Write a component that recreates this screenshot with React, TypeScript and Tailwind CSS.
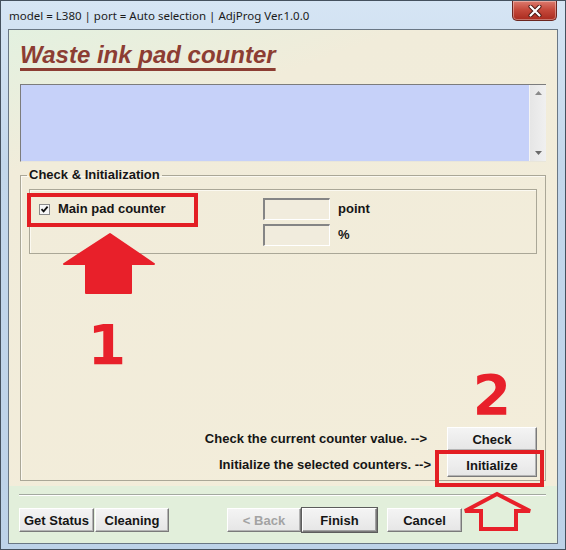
import type { ReactNode } from "react";

const RED = "#e8202a";

function WinButton({
  children,
  width = "w-[75px]",
  isDefault = false,
  disabled = false,
  className = "",
}: {
  children: ReactNode;
  width?: string;
  isDefault?: boolean;
  disabled?: boolean;
  className?: string;
}) {
  return (
    <button
      type="button"
      className={`${width} h-[24px] shrink-0 border border-t-white border-l-white border-b-[#7a7a7a] border-r-[#7a7a7a] bg-[linear-gradient(#f4f4f4,#e6e6e6)] text-[13px] font-bold leading-none ${
        disabled ? "text-[#a3a3a3]" : "text-[#151515]"
      } ${
        isDefault
          ? "shadow-[0_0_0_1px_#5c5c5c,inset_-1px_-1px_0_#a0a0a0]"
          : "shadow-[inset_-1px_-1px_0_#b4b4b4]"
      } ${className}`}
    >
      {children}
    </button>
  );
}

function CheckBox() {
  return (
    <span className="flex h-[11px] w-[11px] items-center justify-center border border-[#8a8a8a] bg-[#f7f7f7]">
      <svg width="9" height="9" viewBox="0 0 9 9">
        <path d="M1.5 4.2 L3.6 6.4 L7.6 1.6" fill="none" stroke="#111" strokeWidth="1.8" />
      </svg>
    </span>
  );
}

function SunkenField() {
  return (
    <div className="h-[22px] w-[67px] border-t-2 border-l-2 border-t-[#858585] border-l-[#858585] border-b border-r border-b-white border-r-white bg-[#f1ecdd]" />
  );
}

function CloseButton() {
  return (
    <div className="flex h-[20px] w-[45px] items-center justify-center rounded-b-[5px] border border-t-0 border-[#6b2620] bg-[linear-gradient(#dc7b6e,#c64a3c_45%,#a92a1e)] shadow-[inset_0_0_0_1px_rgba(255,255,255,0.35)]">
      <svg width="14" height="12" viewBox="0 0 14 12">
        <path d="M2.5 1.5 L11.5 10.5 M11.5 1.5 L2.5 10.5" stroke="#4a1712" strokeWidth="4" strokeLinecap="round" />
        <path d="M2.5 1.5 L11.5 10.5 M11.5 1.5 L2.5 10.5" stroke="#ffffff" strokeWidth="2.2" strokeLinecap="round" />
      </svg>
    </div>
  );
}

// red marks drawn on top of the dialog
function Annotations() {
  return (
    <div className="pointer-events-none absolute inset-0">
      <div className="absolute left-[27px] top-[193px] h-[34px] w-[171px] border-4 border-[#e31e24]" />
      <div className="absolute left-[435px] top-[450px] h-[37px] w-[109px] border-4 border-[#e31e24]" />
      <svg className="absolute left-0 top-0" width="566" height="550" viewBox="0 0 566 550">
        <path
          d="M110 234 L154 264 L131 264 L131 293 L86 293 L86 264 L64 264 Z"
          fill={RED}
          stroke={RED}
          strokeWidth="2"
          strokeLinejoin="round"
        />
        <path
          d="M497 494 L530 511 L516 511 L516 529 L481 529 L481 511 L465 511 Z"
          fill="none"
          stroke={RED}
          strokeWidth="4"
          strokeLinejoin="miter"
        />
      </svg>
      <div className="absolute left-[87px] top-[318px] w-[40px] text-center font-['DejaVu_Sans',sans-serif] text-[55px] font-bold leading-none text-[#e8202a]">
        1
      </div>
      <div className="absolute left-[472px] top-[368px] w-[40px] text-center font-['DejaVu_Sans',sans-serif] text-[55px] font-bold leading-none text-[#e8202a]">
        2
      </div>
    </div>
  );
}

export default function App() {
  return (
    <div className="relative h-[550px] w-[566px] overflow-hidden bg-[linear-gradient(#d6e5f4,#c3d7eb_30%,#bdd2e8)] p-px font-['Liberation_Sans',Arial,sans-serif] text-[#151515] shadow-[inset_0_0_0_1px_#45515e]">
      {/* title bar */}
      <div className="flex h-[28px] items-start justify-between pl-[8px] pr-[8px]">
        <span className="pt-[7px] font-['Noto_Sans',sans-serif] text-[11.5px] leading-[16px] text-[#1b1b1b]">
          model = L380 | port = Auto selection | AdjProg Ver.1.0.0
        </span>
        <CloseButton />
      </div>

      {/* client area */}
      <div className="mx-[7px] flex h-[515px] flex-col border border-[#6a7784] bg-[#e2efdb]">
        <div className="flex h-[456px] flex-col bg-[linear-gradient(160deg,#e3f1e0_0%,#f1ecda_22%,#f3edda_100%)] px-[11px] pt-[11px]">
          <h1 className="h-[28px] text-[24px] font-bold italic leading-[28px] text-[#8c3d33] underline decoration-[3px] underline-offset-[5px]">
            Waste ink pad counter
          </h1>

          {/* log box */}
          <div className="mt-[15px] flex h-[78px] border-t border-l border-t-[#7c7c7c] border-l-[#7c7c7c] border-b border-b-[#e9e6da]">
            <div className="flex-1 bg-[#c6d1f9]" />
            <div className="flex w-[17px] flex-col items-center justify-between border-l border-[#f4f4f4] bg-[linear-gradient(90deg,#e6e6e6,#f0f0f0)] py-[6px]">
              <svg width="7" height="4" viewBox="0 0 7 4">
                <path d="M0 4 L3.5 0 L7 4 Z" fill="#8a8a8a" />
              </svg>
              <svg width="7" height="4" viewBox="0 0 7 4">
                <path d="M0 0 L7 0 L3.5 4 Z" fill="#6a6a6a" />
              </svg>
            </div>
          </div>

          <fieldset className="mt-[5px] border border-[#aaa797] px-[8px] pb-[2px] pt-[6px] shadow-[inset_1px_1px_0_#fbf9f1]">
            <legend className="-ml-[2px] px-[2px] text-[13px] font-bold leading-[16px]">
              Check &amp; Initialization
            </legend>
            <div className="flex h-[289px] flex-col">
              <div className="h-[65px] border border-[#aaa797] pl-[9px] pt-[8px] shadow-[inset_1px_1px_0_#fbf9f1]">
                <div className="grid grid-cols-[224px_67px_auto] gap-y-[4px]">
                  <div className="flex items-center">
                    <CheckBox />
                    <span className="ml-[8px] text-[13px] font-bold">Main pad counter</span>
                  </div>
                  <SunkenField />
                  <span className="ml-[8px] self-center text-[13px] font-bold">point</span>
                  <div />
                  <SunkenField />
                  <span className="ml-[8px] self-center text-[13px] font-bold">%</span>
                </div>
              </div>

              <div className="mt-auto flex flex-col items-end gap-[2px] pb-px">
                <div className="flex items-center">
                  <span className="mr-[20px] text-[13px] font-bold">Check the current counter value. --&gt;</span>
                  <WinButton width="w-[90px]">Check</WinButton>
                </div>
                <div className="flex items-center">
                  <span className="mr-[16px] text-[13px] font-bold">Initialize the selected counters. --&gt;</span>
                  <WinButton width="w-[90px]">Initialize</WinButton>
                </div>
              </div>
            </div>
          </fieldset>
        </div>

        {/* wizard footer */}
        <div className="ml-[10px] mr-[11px] mt-[8px] h-[2px] border-t border-b border-t-[#a3a9a0] border-b-white" />
        <div className="mt-[12px] flex pl-[10px]">
          <WinButton>Get Status</WinButton>
          <WinButton width="w-[74px]" className="ml-px">
            Cleaning
          </WinButton>
          <WinButton width="w-[74px]" disabled className="ml-[58px]">
            &lt; Back
          </WinButton>
          <WinButton isDefault className="ml-px">
            Finish
          </WinButton>
          <WinButton className="ml-[10px]">Cancel</WinButton>
        </div>
      </div>

      <Annotations />
    </div>
  );
}
